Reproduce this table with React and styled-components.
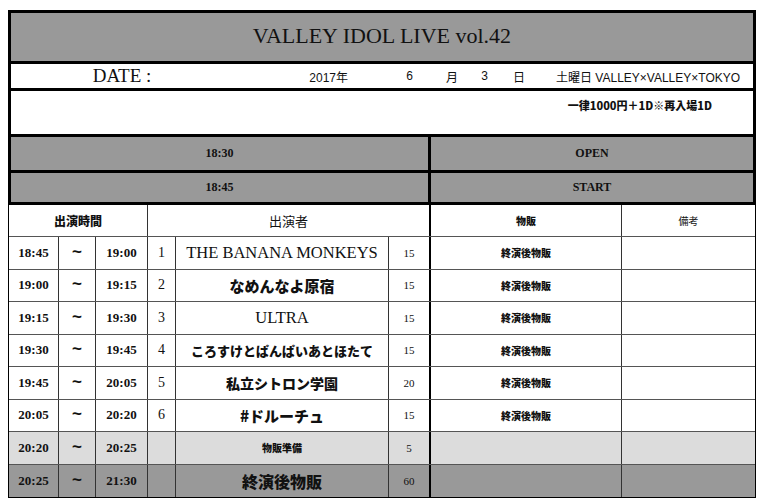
import React from 'react'
import styled, { createGlobalStyle } from 'styled-components'

const serif = `"Liberation Serif", "Noto Sans CJK JP", serif`
const sans = `"Liberation Sans", "Noto Sans CJK JP", sans-serif`
const gothic = `"Noto Sans CJK JP", "Liberation Sans", sans-serif`

const GlobalStyle = createGlobalStyle`
  * { box-sizing: border-box; }
  body {
    margin: 0;
    background: #fff;
    color: #111;
  }
`

const Sheet = styled.div`
  width: 748px;
  margin: 10px 0 0 8px;
`

const Head = styled.div`
  border: 3px solid #000;
`

const Title = styled.div`
  height: 51px;
  background: #999;
  border-bottom: 3px solid #000;
  display: flex;
  align-items: center;
  justify-content: center;
  font-family: ${serif};
  font-size: 22px;
  padding-bottom: 2px;
`

const DateRow = styled.div`
  height: 27px;
  border-bottom: 3px solid #000;
  display: flex;
  align-items: center;
  font-family: ${sans};
  font-size: 12px;
`

const DateLabel = styled.div`
  width: 222px;
  text-align: center;
  font-family: ${serif};
  font-size: 19px;
`

const DateCell = styled.div`
  width: ${(p) => p.$w || 'auto'};
  flex: ${(p) => (p.$w ? 'none' : '1')};
  text-align: ${(p) => p.$align || 'right'};
  padding-left: ${(p) => p.$pl || 0}px;
  white-space: nowrap;
`

const PriceRow = styled.div`
  height: 46px;
  border-bottom: 3px solid #000;
  padding: 7px 41px 0 0;
  text-align: right;
  font-family: ${gothic};
  font-weight: 900;
  font-size: 11px;
  line-height: 14px;
`

const TimeRow = styled.div`
  height: ${(p) => p.$h}px;
  background: #999;
  border-bottom: ${(p) => (p.$last ? 'none' : '3px solid #000')};
  display: grid;
  grid-template-columns: 417px 1fr;
  font-family: ${serif};
  font-weight: 700;
  font-size: 12px;
`

const TimeCell = styled.div`
  display: flex;
  align-items: center;
  justify-content: center;
  border-left: ${(p) => (p.$divider ? '3px solid #000' : 'none')};
`

const Table = styled.div`
  border-left: 1px solid #000;
  border-right: 1px solid #000;
  border-bottom: 1px solid #000;
`

const cols = '50px 37px 52px 28px 213px 42px 191px 1fr'

const Row = styled.div`
  display: grid;
  grid-template-columns: ${cols};
  height: ${(p) => p.$h || 32.5}px;
  background: ${(p) => p.$bg || '#fff'};
  border-bottom: 1px solid #555;
  &:last-child {
    border-bottom: none;
  }
`

const Cell = styled.div`
  grid-column: span ${(p) => p.$span || 1};
  display: flex;
  align-items: center;
  justify-content: center;
  border-right: ${(p) => (p.$strong ? '2px solid #000' : '1px solid #333')};
  white-space: nowrap;
  font-family: ${(p) => p.$font || serif};
  font-size: ${(p) => p.$size || 13}px;
  font-weight: ${(p) => p.$weight || 400};
  &:last-child {
    border-right: none;
  }
`

const Tilde = styled(Cell)`
  font-family: ${sans};
  font-weight: 700;
  font-size: 17px;
  padding-bottom: 2px;
`

const rows = [
  { from: '18:45', to: '19:00', no: '1', name: 'THE BANANA MONKEYS', latin: true, min: '15', goods: true },
  { from: '19:00', to: '19:15', no: '2', name: 'なめんなよ原宿', size: 15, min: '15', goods: true },
  { from: '19:15', to: '19:30', no: '3', name: 'ULTRA', latin: true, min: '15', goods: true },
  { from: '19:30', to: '19:45', no: '4', name: 'ころすけとぱんぱいあとほたて', size: 13, min: '15', goods: true },
  { from: '19:45', to: '20:05', no: '5', name: '私立シトロン学園', size: 14, min: '20', goods: true },
  { from: '20:05', to: '20:20', no: '6', name: '#ドルーチュ', size: 15, min: '15', goods: true },
  { from: '20:20', to: '20:25', no: '', name: '物販準備', size: 10, min: '5', bg: '#dcdcdc' },
  { from: '20:25', to: '21:30', no: '', name: '終演後物販', size: 16, min: '60', bg: '#999' },
]

export default function App() {
  return (
    <>
      <GlobalStyle />
      <Sheet>
        <Head>
          <Title>VALLEY IDOL LIVE vol.42</Title>
          <DateRow>
            <DateLabel>DATE :</DateLabel>
            <DateCell $w="115px">2017年</DateCell>
            <DateCell $w="65px">6</DateCell>
            <DateCell $w="45px">月</DateCell>
            <DateCell $w="30px">3</DateCell>
            <DateCell $w="37px">日</DateCell>
            <DateCell $align="left" $pl={31}>
              土曜日 VALLEY×VALLEY×TOKYO
            </DateCell>
          </DateRow>
          <PriceRow>一律1000円＋1D※再入場1D</PriceRow>
          <TimeRow $h={36}>
            <TimeCell>18:30</TimeCell>
            <TimeCell $divider>OPEN</TimeCell>
          </TimeRow>
          <TimeRow $h={29} $last>
            <TimeCell>18:45</TimeCell>
            <TimeCell $divider>START</TimeCell>
          </TimeRow>
        </Head>
        <Table>
          <Row $h={32}>
            <Cell $span={3} $font={gothic} $weight={900} $size={12}>出演時間</Cell>
            <Cell $span={3} $font={gothic} $size={13} $strong>出演者</Cell>
            <Cell $font={gothic} $weight={900} $size={10}>物販</Cell>
            <Cell $font={gothic} $size={10}>備考</Cell>
          </Row>
          {rows.map((r) => (
            <Row key={r.from} $bg={r.bg}>
              <Cell $weight={700}>{r.from}</Cell>
              <Tilde>~</Tilde>
              <Cell $weight={700}>{r.to}</Cell>
              <Cell $size={14}>{r.no}</Cell>
              <Cell
                $font={r.latin ? serif : gothic}
                $weight={r.latin ? 400 : 900}
                $size={r.latin ? 16.5 : r.size}
              >
                {r.name}
              </Cell>
              <Cell $size={11} $strong>{r.min}</Cell>
              <Cell $font={gothic} $weight={900} $size={10}>
                {r.goods ? '終演後物販' : ''}
              </Cell>
              <Cell />
            </Row>
          ))}
        </Table>
      </Sheet>
    </>
  )
}
